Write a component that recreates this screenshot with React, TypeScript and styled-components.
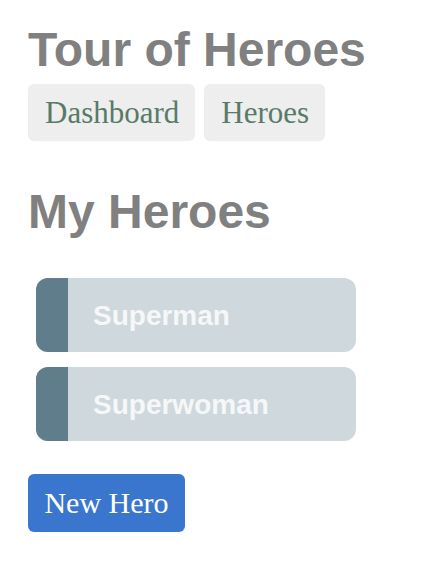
import styled, { createGlobalStyle } from 'styled-components'

const GlobalStyle = createGlobalStyle`
  body {
    margin: 0;
    background: #fff;
  }
`

const Page = styled.div`
  padding: 22px 28px;
  display: flex;
  flex-direction: column;
  align-items: flex-start;
`

const Title = styled.h1`
  margin: 0;
  font-family: 'Liberation Sans', Arial, sans-serif;
  font-weight: 700;
  font-size: 48px;
  line-height: 55px;
  color: #808080;
`

const Nav = styled.nav`
  display: flex;
  gap: 9px;
  margin-top: 7px;
`

const NavLink = styled.a`
  display: flex;
  align-items: center;
  height: 57px;
  padding: 0 16px 0 17px;
  background: #eeeeee;
  border-radius: 6px;
  font-family: 'Liberation Serif', 'Times New Roman', serif;
  font-size: 31px;
  color: #587b68;
  text-decoration: none;
`

const Subtitle = styled(Title).attrs({ as: 'h2' })`
  margin-top: 43px;
`

const HeroList = styled.ul`
  list-style: none;
  margin: 39px 0 0 8px;
  padding: 0;
  display: flex;
  flex-direction: column;
  gap: 15px;
`

const HeroItem = styled.li`
  display: flex;
  width: 320px;
  height: 74px;
  background: #cfd8dc;
  border-radius: 12px;
  overflow: hidden;
`

const Badge = styled.span`
  width: 32px;
  background: #607d8b;
`

const HeroName = styled.span`
  display: flex;
  align-items: center;
  padding: 2px 0 0 25px;
  font-family: 'Liberation Sans', Arial, sans-serif;
  font-weight: 700;
  font-size: 28px;
  color: #f5f7f8;
`

const AddButton = styled.button`
  margin-top: 33px;
  height: 58px;
  width: 157px;
  border: none;
  border-radius: 6px;
  background: #3a76cd;
  color: #fff;
  font-family: 'Liberation Serif', 'Times New Roman', serif;
  font-size: 30px;
  padding: 0;
`

const heroes = ['Superman', 'Superwoman']

export default function App() {
  return (
    <>
      <GlobalStyle />
      <Page>
        <Title>Tour of Heroes</Title>
        <Nav>
          <NavLink href="#">Dashboard</NavLink>
          <NavLink href="#">Heroes</NavLink>
        </Nav>
        <Subtitle>My Heroes</Subtitle>
        <HeroList>
          {heroes.map((name) => (
            <HeroItem key={name}>
              <Badge />
              <HeroName>{name}</HeroName>
            </HeroItem>
          ))}
        </HeroList>
        <AddButton>New Hero</AddButton>
      </Page>
    </>
  )
}
